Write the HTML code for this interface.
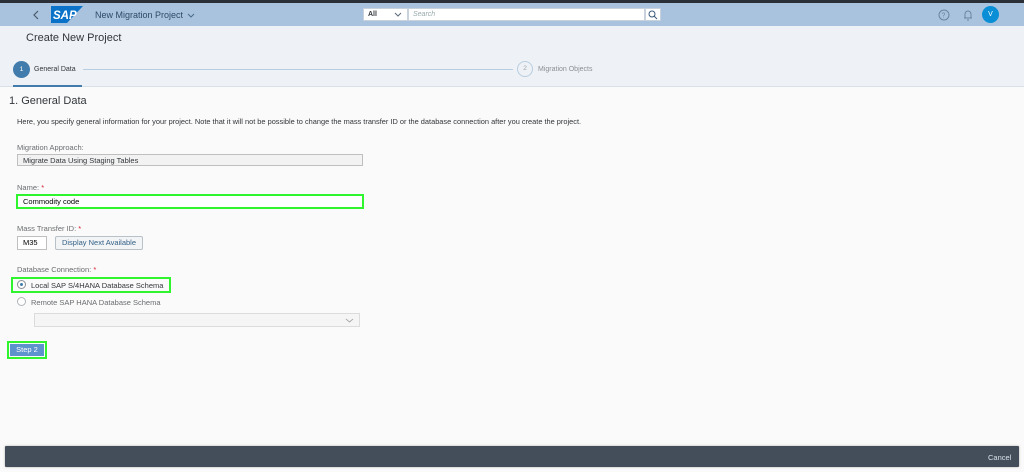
<!DOCTYPE html>
<html><head><meta charset="utf-8"><style>
*{box-sizing:border-box;margin:0;padding:0}
body{width:1024px;height:472px;overflow:hidden;background:#fafafa;font-family:"Liberation Sans",sans-serif;position:relative;color:#32363a}
.a{position:absolute}
.top{left:0;top:0;width:1024px;height:3px;background:#2b3038}
.shell{left:0;top:3px;width:1024px;height:23px;background:#a9c3de}
.hdr{left:0;top:26px;width:1024px;height:61px;background:#eef2f6;border-bottom:1px solid #d8e0e8}
.lbl{font-size:7.5px;color:#6a6d70}
.req{color:#d32030}
.inp{border:1px solid #bfbfbf;background:#fff;font-size:7.5px;padding-left:5px;line-height:11px}
.hl{border:2px solid #2ef52e}
</style></head><body>
<div class="a top"></div>
<div class="a shell"></div>
<svg class="a" style="left:32px;top:10px" width="8" height="10"><path d="M6 1 L2 5 L6 9" stroke="#4a5a6a" stroke-width="1.2" fill="none"/></svg>
<svg class="a" style="left:51px;top:6px" width="32" height="17"><polygon points="0,0 32,0 16,17 0,17" fill="#0a72c8"/><text x="2" y="13" font-family="Liberation Sans" font-weight="bold" font-size="11.5" fill="#fff" font-style="italic">SAP</text></svg>
<div class="a" style="left:95px;top:10px;font-size:9px;color:#2d4a66">New Migration Project</div>
<svg class="a" style="left:187px;top:13px" width="8" height="6"><path d="M1 1 L4 4 L7 1" stroke="#4a6a8a" fill="none"/></svg>
<div class="a" style="left:363px;top:8px;width:45px;height:13px;background:#fff;border:1px solid #c8d2dc;font-size:7px;padding:2px 4px;font-weight:bold">All</div>
<svg class="a" style="left:394px;top:12px" width="8" height="6"><path d="M1 1 L4 4 L7 1" stroke="#5a6a7a" fill="none"/></svg>
<div class="a" style="left:408px;top:8px;width:237px;height:13px;background:#fff;border:1px solid #c8d2dc;font-size:7px;padding:2px 4px;color:#9aa;font-style:italic">Search</div>
<div class="a" style="left:645px;top:8px;width:16px;height:13px;background:#fff;border:1px solid #c8d2dc"></div>
<svg class="a" style="left:648px;top:10px" width="10" height="10"><circle cx="4" cy="4" r="3" stroke="#3a5a7a" fill="none"/><path d="M6 6L9 9" stroke="#3a5a7a"/></svg>
<svg class="a" style="left:938px;top:9px" width="12" height="12"><circle cx="6" cy="6" r="5" stroke="#6a84a0" fill="none"/><text x="3.5" y="8.5" font-size="7" fill="#6a84a0" font-family="Liberation Sans">?</text></svg>
<svg class="a" style="left:962px;top:9px" width="12" height="12"><path d="M3 9 V5 A3 3 0 0 1 9 5 V9 Z M2 9 H10 M5 11 H7" stroke="#6a84a0" fill="none"/></svg>
<div class="a" style="left:982px;top:6px;width:17px;height:17px;border-radius:50%;background:#0a8fd6;color:#fff;font-size:7px;text-align:center;line-height:17px">V</div>
<div class="a hdr"></div>
<div class="a" style="left:26px;top:32px;font-size:11px;color:#32363a">Create New Project</div>
<div class="a" style="left:13px;top:61px;width:17px;height:17px;border-radius:50%;background:#427cac;color:#fff;font-size:6.5px;text-align:center;line-height:17px">1</div>
<div class="a" style="left:34px;top:66px;font-size:7px;color:#32363a">General Data</div>
<div class="a" style="left:83px;top:69px;width:430px;height:1px;background:#b8cde0"></div>
<div class="a" style="left:517px;top:61px;width:16px;height:16px;border-radius:50%;border:1px solid #b8cde0;color:#9aa4ae;font-size:6.5px;text-align:center;line-height:14px">2</div>
<div class="a" style="left:538px;top:66px;font-size:7px;color:#8a9096">Migration Objects</div>
<div class="a" style="left:13px;top:85px;width:69px;height:2px;background:#427cac"></div>
<div class="a" style="left:9px;top:95px;font-size:11px">1. General Data</div>
<div class="a" style="left:17px;top:117px;font-size:7.4px;white-space:nowrap">Here, you specify general information for your project. Note that it will not be possible to change the mass transfer ID or the database connection after you create the project.</div>
<div class="a lbl" style="left:17px;top:143px">Migration Approach:</div>
<div class="a inp" style="left:17px;top:154px;width:346px;height:12px;background:#f2f2f2">Migrate Data Using Staging Tables</div>
<div class="a lbl" style="left:17px;top:183px">Name: <span class="req">*</span></div>
<div class="a inp hl" style="left:16px;top:194px;width:348px;height:15px;line-height:12px;color:#000">Commodity code</div>
<div class="a lbl" style="left:17px;top:224px">Mass Transfer ID: <span class="req">*</span></div>
<div class="a inp" style="left:17px;top:236px;width:30px;height:14px;line-height:12px;color:#000">M35</div>
<div class="a" style="left:55px;top:236px;width:88px;height:14px;border:1px solid #b8c0c8;border-radius:2px;background:#f2f4f6;color:#346187;font-size:7.5px;text-align:center;line-height:12px">Display Next Available</div>
<div class="a lbl" style="left:17px;top:265px">Database Connection: <span class="req">*</span></div>
<div class="a hl" style="left:11px;top:277px;width:160px;height:16px"></div>
<div class="a" style="left:17px;top:280px;width:9px;height:9px;border-radius:50%;border:1px solid #8a9096;background:#fff"><div style="margin:2px;width:3px;height:3px;border-radius:50%;background:#427cac"></div></div>
<div class="a" style="left:31px;top:281px;font-size:7.5px;color:#32363a">Local SAP S/4HANA Database Schema</div>
<div class="a" style="left:17px;top:297px;width:9px;height:9px;border-radius:50%;border:1px solid #b0b4b8;background:#fff"></div>
<div class="a" style="left:31px;top:298px;font-size:7.5px;color:#6a6d70">Remote SAP HANA Database Schema</div>
<div class="a" style="left:34px;top:313px;width:326px;height:14px;border:1px solid #dcdcdc;background:#f5f5f5"></div>
<svg class="a" style="left:345px;top:318px" width="9" height="6"><path d="M1 1 L4.5 4 L8 1" stroke="#aaa" fill="none"/></svg>
<div class="a hl" style="left:7px;top:341px;width:40px;height:18px;padding:1px"><div style="width:100%;height:100%;background:#5c93cc;color:#fff;font-size:7.5px;text-align:center;line-height:12px">Step 2</div></div>
<div class="a" style="left:5px;top:446px;width:1014px;height:21px;background:#434e5a;border-radius:1px;box-shadow:0 0 2px rgba(0,0,0,.3)"></div>
<div class="a" style="left:988px;top:453px;font-size:7.5px;color:#d8e2ec">Cancel</div>
</body></html>
